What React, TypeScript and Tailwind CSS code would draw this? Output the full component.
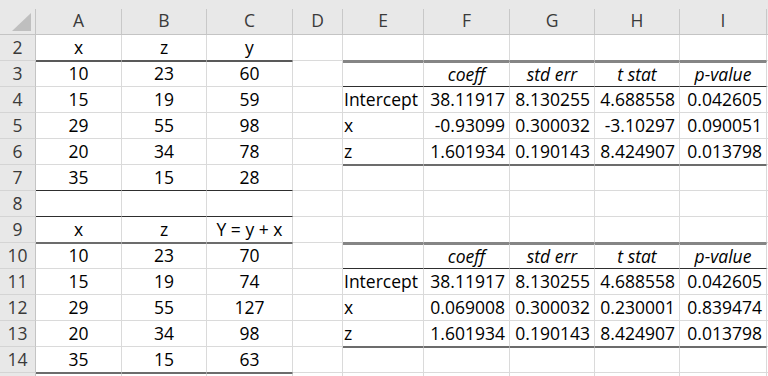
import React from 'react';

// Sheet grid: row header + columns A..I, widths include the 1px right gridline
const COLS = [
  { key: 'A', w: 'w-[86px]' },
  { key: 'B', w: 'w-[85px]' },
  { key: 'C', w: 'w-[86px]' },
  { key: 'D', w: 'w-[50px]' },
  { key: 'E', w: 'w-[81px]' },
  { key: 'F', w: 'w-[86px]' },
  { key: 'G', w: 'w-[85px]' },
  { key: 'H', w: 'w-[85px]' },
  { key: 'I', w: 'w-[87px]' },
];

type Line = 'dark2' | 'thin' | 'med2' | 'thick3';

const LINE: Record<Line, { b: string; t: string }> = {
  dark2: { b: 'border-b-[#595959]', t: 'border-t border-t-[#595959]' },
  thin: { b: 'border-b-[#2e2e2e]', t: '' },
  med2: { b: 'border-b-[#6c6c6c]', t: 'border-t border-t-[#6c6c6c]' },
  thick3: { b: 'border-b-[#858585]', t: 'border-t-2 border-t-[#858585]' },
};

// bottom borders of the two tables, keyed by row number
const LEFT_LINES: Record<number, Line> = { 2: 'dark2', 7: 'thin', 8: 'thin', 9: 'med2', 14: 'med2' };
const RIGHT_LINES: Record<number, Line> = { 2: 'thick3', 3: 'thin', 6: 'med2', 9: 'thick3', 10: 'thin', 13: 'med2' };

type Align = 'c' | 'l' | 'r' | 'h';

interface RowDef {
  n: number;
  cells: string[];
}

const reg1 = [
  ['', 'coeff', 'std err', 't stat', 'p-value'],
  ['Intercept', '38.11917', '8.130255', '4.688558', '0.042605'],
  ['x', '-0.93099', '0.300032', '-3.10297', '0.090051'],
  ['z', '1.601934', '0.190143', '8.424907', '0.013798'],
];

const reg2 = [
  ['', 'coeff', 'std err', 't stat', 'p-value'],
  ['Intercept', '38.11917', '8.130255', '4.688558', '0.042605'],
  ['x', '0.069008', '0.300032', '0.230001', '0.839474'],
  ['z', '1.601934', '0.190143', '8.424907', '0.013798'],
];

const blank5 = ['', '', '', '', ''];

const ROWS: RowDef[] = [
  { n: 2, cells: ['x', 'z', 'y', '', ...blank5] },
  { n: 3, cells: ['10', '23', '60', '', ...reg1[0]] },
  { n: 4, cells: ['15', '19', '59', '', ...reg1[1]] },
  { n: 5, cells: ['29', '55', '98', '', ...reg1[2]] },
  { n: 6, cells: ['20', '34', '78', '', ...reg1[3]] },
  { n: 7, cells: ['35', '15', '28', '', ...blank5] },
  { n: 8, cells: ['', '', '', '', ...blank5] },
  { n: 9, cells: ['x', 'z', 'Y = y + x', '', ...blank5] },
  { n: 10, cells: ['10', '23', '70', '', ...reg2[0]] },
  { n: 11, cells: ['15', '19', '74', '', ...reg2[1]] },
  { n: 12, cells: ['29', '55', '127', '', ...reg2[2]] },
  { n: 13, cells: ['20', '34', '98', '', ...reg2[3]] },
  { n: 14, cells: ['35', '15', '63', '', ...blank5] },
];

function alignFor(n: number, col: number): Align {
  if (col <= 3) return 'c';
  if (n === 3 || n === 10) return 'h';
  if (col === 4) return 'l';
  return 'r';
}

const ALIGN: Record<Align, string> = {
  c: 'justify-center',
  l: 'justify-start pl-[1px]',
  r: 'justify-end pr-[4px]',
  h: 'justify-center italic',
};

function lineFor(n: number, col: number): Line | undefined {
  if (col <= 2) return LEFT_LINES[n];
  if (col >= 4) return RIGHT_LINES[n];
  return undefined;
}

function Cell({ n, col, text }: { n: number; col: number; text: string }) {
  const below = lineFor(n, col);
  const above = lineFor(n - 1, col);
  const bottom = below ? LINE[below].b : 'border-b-[#dadada]';
  const top = above ? LINE[above].t : '';
  return (
    <div
      className={`${COLS[col].w} h-full shrink-0 flex items-center whitespace-nowrap border-r border-r-[#dadada] border-b ${bottom} ${top} ${ALIGN[alignFor(n, col)]}`}
    >
      {text}
    </div>
  );
}

function RowHead({ label }: { label: string }) {
  return (
    <div className="w-[36px] h-full shrink-0 flex items-center justify-center bg-[#e8e8e8] border-r border-r-[#c4c4c4] border-b border-b-[#d4d4d4] text-[#3a3a3a]">
      {label}
    </div>
  );
}

export default function App() {
  return (
    <div
      className="w-[768px] h-[376px] overflow-hidden bg-white text-[17.5px] leading-none text-black"
      style={{ fontFamily: '"Open Sans", "Noto Sans", sans-serif' }}
    >
      {/* column header strip */}
      <div className="flex items-end h-[35px] bg-[#e8e8e8] border-b border-b-[#c4c4c4] text-[#3a3a3a]">
        <div className="w-[36px] h-[25px] shrink-0 flex items-end justify-end pr-[3px] pb-[2px] border-r border-r-[#c4c4c4]">
          <svg width="20" height="19" viewBox="0 0 20 19">
            <polygon points="19,0 19,18 0,18" fill="#bfbfbf" />
          </svg>
        </div>
        {COLS.map((c) => (
          <div
            key={c.key}
            className={`${c.w} h-[25px] shrink-0 flex items-center justify-center pb-[1px] border-r border-r-[#c8c8c8]`}
          >
            {c.key}
          </div>
        ))}
        <div className="flex-1 h-[25px]" />
      </div>

      {ROWS.map((r) => (
        <div key={r.n} className="flex h-[26px]">
          <RowHead label={String(r.n)} />
          {r.cells.map((t, i) => (
            <Cell key={i} n={r.n} col={i} text={t} />
          ))}
          <div className="flex-1 border-b border-b-[#dadada]" />
        </div>
      ))}

      {/* first pixels of row 15 */}
      <div className="flex h-[3px]">
        <div className="w-[36px] h-full shrink-0 bg-[#e8e8e8] border-r border-r-[#c4c4c4]" />
        {COLS.map((c, i) => (
          <div
            key={c.key}
            className={`${c.w} h-full shrink-0 border-r border-r-[#dadada] ${i <= 2 ? 'border-t border-t-[#6c6c6c]' : ''}`}
          />
        ))}
      </div>
    </div>
  );
}
